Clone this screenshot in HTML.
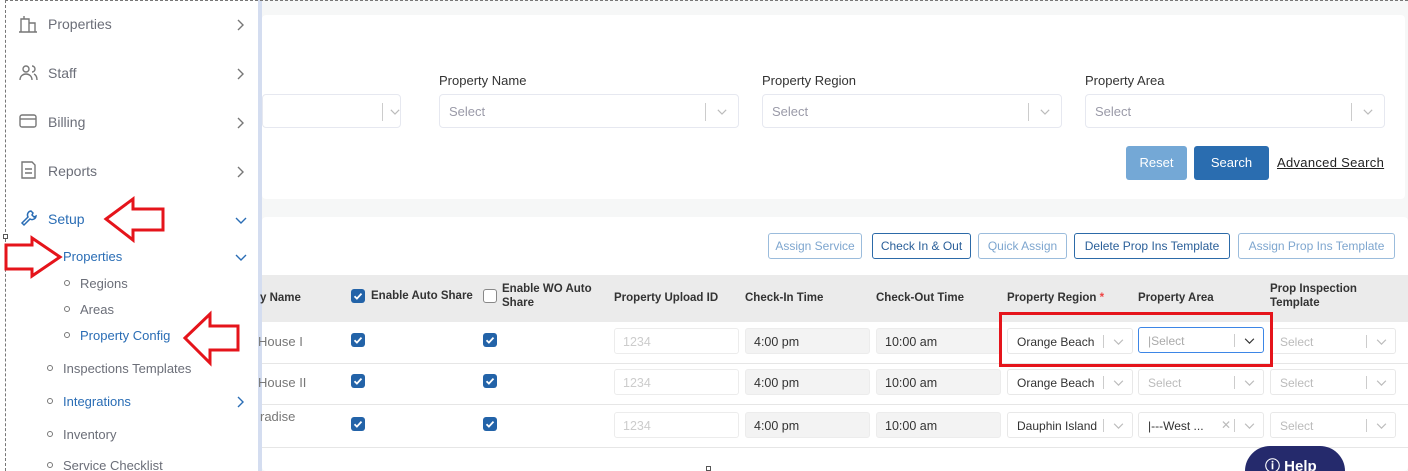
<!DOCTYPE html><html><head><style>
*{box-sizing:border-box;margin:0;padding:0}
html{width:1408px;height:471px;overflow:hidden}
body{width:1408px;height:471px;overflow:hidden;background:#f6f7f7;font-family:"Liberation Sans",sans-serif;position:relative;color:#333}
.a{position:absolute}
.side{left:0;top:0;width:258px;height:471px;background:#fff}
.sbar{left:258px;top:0;width:4px;height:471px;background:#d4ddf0}
.mi{position:absolute;left:48px;font-size:14px;color:#6b6e78}
.chev{position:absolute;left:236px}
.sub{position:absolute;font-size:13px;color:#6b6e78}
.dot{position:absolute;width:6px;height:6px;border:1px solid #777;border-radius:50%}
.card{background:#fff;border-radius:4px}
.lbl{font-size:13px;color:#333}
.sel{border:1px solid #e6e8f0;border-radius:4px;background:#fff;height:34px;font-size:13px;color:#9a9aa8;padding:9px 9px}
.sel .bar{position:absolute;top:8px;width:1px;height:18px;background:#ccc}
.sel svg{position:absolute;top:13px}
.btn{position:absolute;top:233px;height:26px;border:1px solid #9bbcdc;border-radius:3px;font-size:12px;color:#7ea6cf;text-align:center;line-height:24px;background:#fff}
.btn.d{border-color:#2c6aa8;color:#2a5f99}
.th{position:absolute;font-size:11.5px;font-weight:bold;color:#333;line-height:14px}
.cb{position:absolute;width:14px;height:14px;border-radius:3px;background:#2363a8}
.in{position:absolute;height:26px;border:1px solid #ececec;border-radius:3px;font-size:12.5px;padding:6px 8px;color:#333}
.rs{position:absolute;height:26px;border:1px solid #e8e8e8;border-radius:3px;font-size:12px;padding:6px 9px;color:#333;background:#fff}
.rs b{position:absolute;right:28px;top:6px;width:1px;height:13px;background:#ccc}
.rs svg{position:absolute;right:8px;top:9px}
</style></head><body>
<svg width="0" height="0" style="position:absolute"><defs>
<symbol id="cr" viewBox="0 0 8 12"><path d="M2 1l5 5-5 5" fill="none" stroke="currentColor" stroke-width="1.4"/></symbol>
<symbol id="cd" viewBox="0 0 12 8"><path d="M1 2l5 5 5-5" fill="none" stroke="currentColor" stroke-width="1.4"/></symbol>
<symbol id="ck" viewBox="0 0 14 14"><path d="M3.5 7.2l2.4 2.4 4.6-5" fill="none" stroke="#fff" stroke-width="1.8"/></symbol>
</defs></svg>
<div class="a card" style="left:262px;top:15px;width:1143px;height:184px"></div>
<div class="a card" style="left:262px;top:217px;width:1146px;height:254px"></div>

<div class="a side"></div><div class="a sbar"></div>
<div class="a" style="left:5px;top:0;width:1403px;height:1px;border-top:1px dashed #777"></div>
<div class="a" style="left:5px;top:0;width:1px;height:471px;border-left:1px dashed #777"></div>

<svg class="a" style="left:18px;top:14px" width="22" height="170" fill="none" stroke="#777" stroke-width="1.4">
<path d="M3 18V5h8v13M11 9h6v9M1 18h18M6 5V2"/>
<circle cx="8" cy="55" r="3"/><path d="M2 66c0-4 3-6 6-6s6 2 6 6M14 52a3 3 0 010 6M16 60c2 1 3 3 3 6"/>
<rect x="2" y="101" width="16" height="12" rx="2"/><path d="M2 105h16"/>
<path d="M4 148h10l3 3v13H4zM7 155h7M7 159h7"/>
</svg>
<svg class="a" style="left:20px;top:209px" width="18" height="18" fill="none" stroke="#2a6db5" stroke-width="1.5"><path d="M11 2a4 4 0 00-3 6l-6 6 2 2 6-6a4 4 0 006-3l-2 1-2-2 1-2z"/></svg>
<div class="mi" style="top:16px">Properties</div><svg class="chev" style="top:19px;color:#777" width="8" height="12"><use href="#cr"/></svg>
<div class="mi" style="top:65px">Staff</div><svg class="chev" style="top:68px;color:#777" width="8" height="12"><use href="#cr"/></svg>
<div class="mi" style="top:114px">Billing</div><svg class="chev" style="top:117px;color:#777" width="8" height="12"><use href="#cr"/></svg>
<div class="mi" style="top:163px">Reports</div><svg class="chev" style="top:166px;color:#777" width="8" height="12"><use href="#cr"/></svg>
<div class="mi" style="top:211px;color:#2a6db5">Setup</div><svg class="chev" style="top:216px;left:235px;color:#2a6db5" width="12" height="8"><use href="#cd"/></svg>
<div class="sub" style="left:63px;top:249px;color:#2a6db5">Properties</div><svg class="chev" style="top:253px;left:235px;color:#2a6db5" width="12" height="8"><use href="#cd"/></svg>
<div class="dot" style="left:64px;top:280px"></div><div class="sub" style="left:80px;top:276px">Regions</div>
<div class="dot" style="left:64px;top:306px"></div><div class="sub" style="left:80px;top:302px">Areas</div>
<div class="dot" style="left:64px;top:332px"></div><div class="sub" style="left:80px;top:328px;color:#2a6db5">Property Config</div>
<div class="dot" style="left:47px;top:365px"></div><div class="sub" style="left:63px;top:361px">Inspections Templates</div>
<div class="dot" style="left:47px;top:398px"></div><div class="sub" style="left:63px;top:394px;color:#2a6db5">Integrations</div><svg class="chev" style="top:396px;color:#2a6db5" width="8" height="12"><use href="#cr"/></svg>
<div class="dot" style="left:47px;top:431px"></div><div class="sub" style="left:63px;top:427px">Inventory</div>
<div class="dot" style="left:47px;top:462px"></div><div class="sub" style="left:63px;top:458px">Service Checklist</div>

<div class="a sel" style="left:262px;top:94px;width:139px"><span class="bar" style="left:119px"></span><svg style="left:127px;color:#bbb" width="10" height="7"><use href="#cd"/></svg></div>
<div class="a lbl" style="left:439px;top:73px">Property Name</div>
<div class="a sel" style="left:439px;top:94px;width:300px">Select<span class="bar" style="left:265px"></span><svg style="left:277px;color:#bbb" width="10" height="7"><use href="#cd"/></svg></div>
<div class="a lbl" style="left:762px;top:73px">Property Region</div>
<div class="a sel" style="left:762px;top:94px;width:300px">Select<span class="bar" style="left:265px"></span><svg style="left:277px;color:#bbb" width="10" height="7"><use href="#cd"/></svg></div>
<div class="a lbl" style="left:1085px;top:73px">Property Area</div>
<div class="a sel" style="left:1085px;top:94px;width:300px">Select<span class="bar" style="left:265px"></span><svg style="left:277px;color:#bbb" width="10" height="7"><use href="#cd"/></svg></div>
<div class="a" style="left:1126px;top:146px;width:61px;height:34px;background:#74a8d6;border-radius:3px;color:#fff;font-size:13px;text-align:center;line-height:34px">Reset</div>
<div class="a" style="left:1194px;top:146px;width:75px;height:34px;background:#2a6db0;border-radius:3px;color:#fff;font-size:13px;text-align:center;line-height:34px">Search</div>
<div class="a" style="left:1277px;top:155px;font-size:13px;color:#222;text-decoration:underline;letter-spacing:0.3px">Advanced Search</div>

<div class="btn" style="left:768px;width:94px">Assign Service</div>
<div class="btn d" style="left:872px;width:99px">Check In &amp; Out</div>
<div class="btn" style="left:978px;width:89px">Quick Assign</div>
<div class="btn d" style="left:1074px;width:156px">Delete Prop Ins Template</div>
<div class="btn" style="left:1238px;width:157px">Assign Prop Ins Template</div>

<div class="a" style="left:262px;top:275px;width:1146px;height:47px;background:#ebebeb"></div>
<div class="a" style="left:262px;top:363px;width:1146px;height:1px;background:#e6e6e6"></div>
<div class="a" style="left:262px;top:404px;width:1146px;height:1px;background:#e6e6e6"></div>
<div class="a" style="left:262px;top:447px;width:1146px;height:1px;background:#e6e6e6"></div>
<div class="th" style="left:260px;top:291px">y Name</div>
<div class="cb" style="left:351px;top:289px"><svg width="14" height="14"><use href="#ck"/></svg></div><div class="th" style="left:371px;top:289px">Enable Auto Share</div>
<div class="a" style="left:483px;top:289px;width:14px;height:14px;border:1px solid #888;border-radius:3px;background:#fff"></div>
<div class="th" style="left:502px;top:282px">Enable WO Auto<br>Share</div>
<div class="th" style="left:614px;top:291px">Property Upload ID</div>
<div class="th" style="left:745px;top:291px">Check-In Time</div>
<div class="th" style="left:876px;top:291px">Check-Out Time</div>
<div class="th" style="left:1007px;top:291px">Property Region <span style="color:#e44">*</span></div>
<div class="th" style="left:1138px;top:291px">Property Area</div>
<div class="th" style="left:1270px;top:282px">Prop Inspection<br>Template</div>

<div class="sub" style="left:258px;top:334px;color:#777">House I</div>
<div class="sub" style="left:258px;top:375px;color:#777">House II</div>
<div class="sub" style="left:260px;top:409px;color:#777">radise</div>

<div class="cb" style="left:351px;top:333px"><svg width="14" height="14"><use href="#ck"/></svg></div><div class="cb" style="left:483px;top:333px"><svg width="14" height="14"><use href="#ck"/></svg></div>
<div class="cb" style="left:351px;top:374px"><svg width="14" height="14"><use href="#ck"/></svg></div><div class="cb" style="left:483px;top:374px"><svg width="14" height="14"><use href="#ck"/></svg></div>
<div class="cb" style="left:351px;top:417px"><svg width="14" height="14"><use href="#ck"/></svg></div><div class="cb" style="left:483px;top:417px"><svg width="14" height="14"><use href="#ck"/></svg></div>

<div class="in" style="left:614px;top:328px;width:125px;color:#ccc">1234</div>
<div class="in" style="left:745px;top:328px;width:125px;background:#f3f3f3">4:00 pm</div>
<div class="in" style="left:876px;top:328px;width:125px;background:#f3f3f3">10:00 am</div>
<div class="in" style="left:614px;top:369px;width:125px;color:#ccc">1234</div>
<div class="in" style="left:745px;top:369px;width:125px;background:#f3f3f3">4:00 pm</div>
<div class="in" style="left:876px;top:369px;width:125px;background:#f3f3f3">10:00 am</div>
<div class="in" style="left:614px;top:412px;width:125px;color:#ccc">1234</div>
<div class="in" style="left:745px;top:412px;width:125px;background:#f3f3f3">4:00 pm</div>
<div class="in" style="left:876px;top:412px;width:125px;background:#f3f3f3">10:00 am</div>

<div class="rs" style="left:1007px;top:328px;width:126px">Orange Beach<b></b><svg width="11" height="7" style="color:#bbb"><use href="#cd"/></svg></div>
<div class="rs" style="left:1138px;top:327px;width:126px;border-color:#3d86e6;color:#aaa">|Select<b></b><svg width="11" height="7" style="color:#333"><use href="#cd"/></svg></div>
<div class="rs" style="left:1270px;top:328px;width:126px;color:#bbb">Select<b></b><svg width="11" height="7" style="color:#bbb"><use href="#cd"/></svg></div>
<div class="rs" style="left:1007px;top:369px;width:126px">Orange Beach<b></b><svg width="11" height="7" style="color:#bbb"><use href="#cd"/></svg></div>
<div class="rs" style="left:1138px;top:369px;width:126px;color:#bbb">Select<b></b><svg width="11" height="7" style="color:#bbb"><use href="#cd"/></svg></div>
<div class="rs" style="left:1270px;top:369px;width:126px;color:#bbb">Select<b></b><svg width="11" height="7" style="color:#bbb"><use href="#cd"/></svg></div>
<div class="rs" style="left:1007px;top:412px;width:126px">Dauphin Island<b></b><svg width="11" height="7" style="color:#bbb"><use href="#cd"/></svg></div>
<div class="rs" style="left:1138px;top:412px;width:126px">|---West ...<span style="position:absolute;right:32px;top:5px;color:#bbb">✕</span><b></b><svg width="11" height="7" style="color:#bbb"><use href="#cd"/></svg></div>
<div class="rs" style="left:1270px;top:412px;width:126px;color:#bbb">Select<b></b><svg width="11" height="7" style="color:#bbb"><use href="#cd"/></svg></div>

<div class="a" style="left:999px;top:312px;width:274px;height:55px;border:3px solid #e5141b"></div>
<div class="a" style="left:1245px;top:446px;width:100px;height:25px;overflow:hidden;background:#252a6c;border-radius:25px 25px 0 0;color:#fff;font-weight:bold;font-size:15px;padding:12px 0 0 20px;line-height:18px">ⓘ Help</div>
<div class="a" style="left:706px;top:466px;width:5px;height:5px;border:1px solid #555;background:#fff"></div>
<div class="a" style="left:3px;top:234px;width:5px;height:5px;border:1px solid #555;background:#fff"></div>

<svg class="a" style="left:0;top:0" width="260" height="471" fill="#fff" stroke="#e5141b" stroke-width="3" stroke-linejoin="miter">
<polygon points="106,219 133,199 133,209 163,209 163,230 133,230 133,240"/>
<polygon points="6,245 32,245 32,238 60,257 32,276 32,269 6,269"/>
<polygon points="185,338 210,314 210,326 238,326 238,350 210,350 210,363"/>
</svg>
</body></html>
